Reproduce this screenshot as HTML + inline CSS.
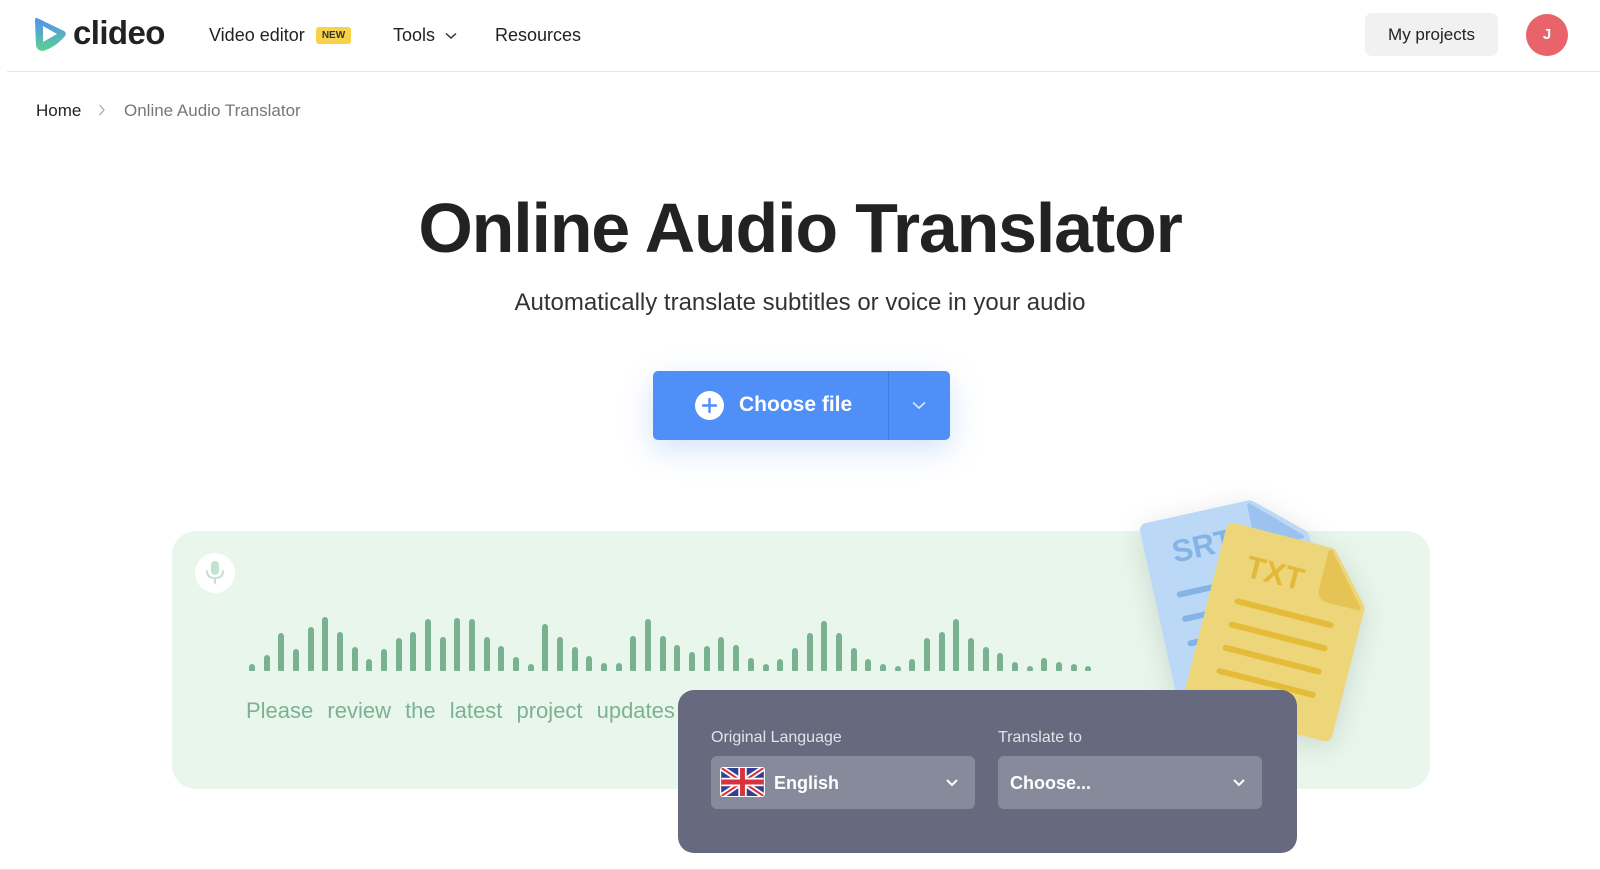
<!DOCTYPE html>
<html><head><meta charset="utf-8">
<style>
*{margin:0;padding:0;box-sizing:border-box}
body{width:1600px;height:870px;overflow:hidden;background:#fff;font-family:"Liberation Sans",sans-serif;color:#222;position:relative}
.a{position:absolute}
.hdr{left:7px;right:0;top:71px;height:1px;background:#e6e6e6}
.nav{font-size:18px;color:#222;top:25px}
.badge{left:316px;top:27px;width:35px;height:17px;background:#f8d24a;border-radius:3px;font-size:10px;font-weight:bold;text-align:center;line-height:17px;color:#333}
.myp{left:1365px;top:13px;width:133px;height:43px;background:#f1f1f1;border-radius:7px;font-size:17px;text-align:center;line-height:43px;color:#222}
.av{left:1526px;top:14px;width:42px;height:42px;border-radius:50%;background:#e8636a;color:#fff;text-align:center;line-height:42px;font-size:15px;font-weight:bold}
.crumb{top:101px;font-size:17px}
h1{position:absolute;left:0;width:1600px;text-align:center;top:188px;font-size:70px;font-weight:bold;letter-spacing:-1.2px;color:#222}
.sub{left:0;width:1600px;text-align:center;top:289px;font-size:24px;color:#333}
.btn{left:653px;top:371px;width:297px;height:69px;background:#4f8ff7;border-radius:5px;box-shadow:0 10px 30px rgba(79,143,247,.25)}
.green{left:172px;top:531px;width:1258px;height:258px;background:#e8f6ec;border-radius:24px}
.mic{left:195px;top:553px;width:40px;height:40px;border-radius:50%;background:#fff}
.bar{position:absolute;width:6px;border-radius:3px 3px 1px 1px;background:#79b28f;bottom:199px}
.pl{left:246px;top:698px;font-size:22px;color:#7cb292;word-spacing:8px;white-space:nowrap}
.panel{left:678px;top:690px;width:619px;height:163px;background:#676a7f;border-radius:16px}
.lbl{font-size:16px;color:#e2e3ea;top:729px}
.sel{top:756px;height:53px;width:264px;background:#878a9b;border-radius:6px}
.st{font-size:18px;font-weight:bold;color:#fff;top:773px}
.bl{left:0;right:0;top:869px;height:1px;background:#e2e2e2}
</style></head><body>
<div class="a hdr"></div>
<svg class="a" style="left:34px;top:15px" width="34" height="38" viewBox="0 0 34 38">
<defs><linearGradient id="lg" x1="0" y1="0" x2="0" y2="1"><stop offset="0" stop-color="#4f8ff7"/><stop offset="1" stop-color="#5ed18c"/></linearGradient></defs>
<path d="M3 3 Q1 2 1 6 L2 30 Q3 36 9 36 Q22 32 31 21 Q33 18 30 16 Z" fill="url(#lg)"/>
<path d="M9 11 L23 19 L9 27 Z" fill="#fff"/>
</svg>
<div class="a" style="left:73px;top:14px;font-size:33px;font-weight:bold;color:#222;letter-spacing:-0.6px">clideo</div>
<div class="a nav" style="left:209px">Video editor</div>
<div class="a badge">NEW</div>
<div class="a nav" style="left:393px">Tools</div>
<svg class="a" style="left:445px;top:32px" width="12" height="8"><path d="M1 1.5 L6 6 L11 1.5" stroke="#333" stroke-width="1.5" fill="none"/></svg>
<div class="a nav" style="left:495px">Resources</div>
<div class="a myp">My projects</div>
<div class="a av">J</div>
<div class="a crumb" style="left:36px;color:#222">Home</div>
<svg class="a" style="left:98px;top:104px" width="8" height="12"><path d="M1.5 1 L6 6 L1.5 11" stroke="#aaa" stroke-width="1.3" fill="none"/></svg>
<div class="a crumb" style="left:124px;color:#777">Online Audio Translator</div>
<h1>Online Audio Translator</h1>
<div class="a sub">Automatically translate subtitles or voice in your audio</div>
<div class="a btn">
 <div class="a" style="left:42px;top:20px;width:29px;height:29px;border-radius:50%;background:#fff"></div>
 <svg class="a" style="left:49px;top:27px" width="15" height="15"><path d="M7.5 1V14M1 7.5H14" stroke="#4f8ff7" stroke-width="2.4" stroke-linecap="round"/></svg>
 <div class="a" style="left:86px;top:22px;font-size:21px;font-weight:bold;color:#fff">Choose file</div>
 <div class="a" style="left:235px;top:0;width:1px;height:69px;background:#3f7de0"></div>
 <svg class="a" style="left:259px;top:30px" width="14" height="9"><path d="M1 1.5 L7 7 L13 1.5" stroke="#dbe7fd" stroke-width="1.6" fill="none"/></svg>
</div>
<div class="a green"></div>
<div class="a mic"></div>
<svg class="a" style="left:205px;top:561px" width="20" height="24"><rect x="6" y="0" width="8" height="14" rx="4" fill="#c3e2cf"/><path d="M2 10 Q2 17 10 17 Q18 17 18 10 M10 17V22" stroke="#c3e2cf" stroke-width="2" fill="none" stroke-linecap="round"/></svg>
<div id="bars"></div>
<div class="a pl">Please review the latest project updates</div>
<svg class="a" style="left:0;top:0;filter:drop-shadow(0 6px 14px rgba(0,0,0,.12))" width="1600" height="870">
<g transform="translate(1147,530) rotate(-12.5)">
<path d="M0 0 H105 L150 40 V175 H0 Z" fill="#bcd8f7" stroke="#bcd8f7" stroke-width="14" stroke-linejoin="round"/>
<path d="M105 -2 L105 30 Q105 40 115 40 L150 40 Z" fill="#9cc3ef" stroke="#9cc3ef" stroke-width="4" stroke-linejoin="round"/>
<text x="20" y="38" font-family="Liberation Sans" font-weight="bold" font-size="31" fill="#84b3e6">SRT</text>
<path d="M18 70H75M18 95H75M18 120H75" stroke="#84b3e6" stroke-width="6" stroke-linecap="round"/>
</g>
<g transform="translate(1233,530) rotate(14.3)">
<path d="M0 0 H100 L140 45 V175 H0 Z" fill="#edd679" stroke="#edd679" stroke-width="14" stroke-linejoin="round"/>
<path d="M100 -3 L100 35 Q100 45 110 45 L141 45 Z" fill="#e5c354" stroke="#e5c354" stroke-width="4" stroke-linejoin="round"/>
<text x="22" y="42" font-family="Liberation Sans" font-weight="bold" font-size="31" fill="#e2b93b">TXT</text>
<path d="M22 68H118M22 92H118M22 116H118M22 140H118M22 164H85" stroke="#e4bc3a" stroke-width="6" stroke-linecap="round"/>
</g>
</svg>
<div class="a panel"></div>
<div class="a lbl" style="left:711px">Original Language</div>
<div class="a lbl" style="left:998px">Translate to</div>
<div class="a sel" style="left:711px"></div>
<div class="a sel" style="left:998px"></div>
<svg class="a" style="left:720px;top:767px;border-radius:3px;border:1.5px solid #fff" width="45" height="30" viewBox="0 0 60 40">
<rect width="60" height="40" fill="#2f3f94"/>
<path d="M0 0L60 40M60 0L0 40" stroke="#fff" stroke-width="8"/>
<path d="M0 0L60 40M60 0L0 40" stroke="#d8323e" stroke-width="3"/>
<path d="M30 0V40M0 20H60" stroke="#fff" stroke-width="12"/>
<path d="M30 0V40M0 20H60" stroke="#d8323e" stroke-width="7"/>
</svg>
<div class="a st" style="left:774px">English</div>
<div class="a st" style="left:1010px">Choose...</div>
<svg class="a" style="left:945px;top:778px" width="14" height="9"><path d="M2 2 L7 7 L12 2" stroke="#fff" stroke-width="2" fill="none"/></svg>
<svg class="a" style="left:1232px;top:778px" width="14" height="9"><path d="M2 2 L7 7 L12 2" stroke="#fff" stroke-width="2" fill="none"/></svg>
<div class="a bl"></div>
<script>
var h=[7,16,38,22,44,54,39,24,12,22,33,39,52,34,53,52,34,25,14,7,47,34,24,15,8,8,35,52,35,26,19,25,34,26,13,7,12,23,38,50,38,23,12,7,5,12,33,39,52,33,24,18,9,5,13,9,7,5];
var s='';for(var i=0;i<h.length;i++){s+='<div class="bar" style="left:'+(249+i*14.67).toFixed(1)+'px;height:'+h[i]+'px"></div>';}
document.getElementById('bars').innerHTML=s;
</script>
</body></html>
